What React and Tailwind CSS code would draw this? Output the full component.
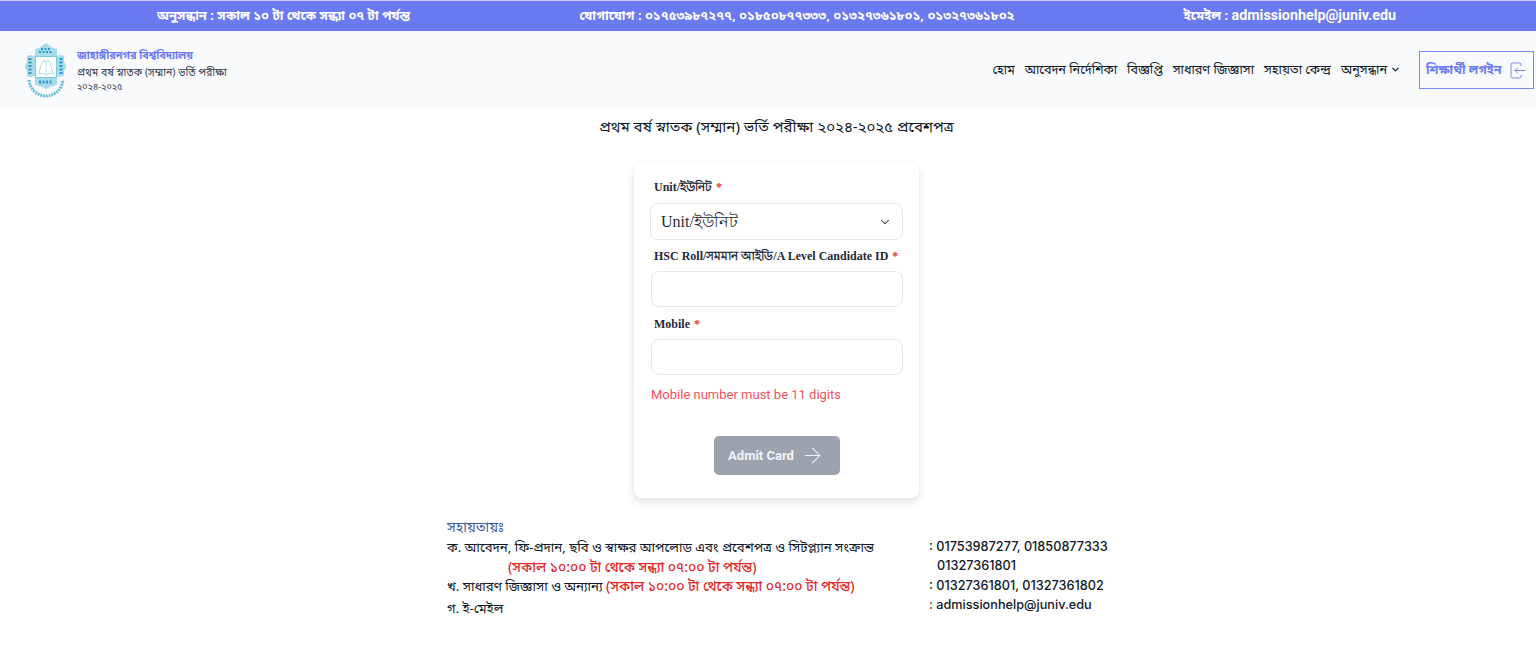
import { ChevronDown, ArrowRight } from "lucide-react";

const BN = "font-['Noto_Sans','Noto_Sans_Bengali','Lohit_Bengali','FreeSerif',sans-serif]";

const NAV_ITEMS = ["হোম", "আবেদন নির্দেশিকা", "বিজ্ঞপ্তি", "সাধারণ জিজ্ঞাসা", "সহায়তা কেন্দ্র"];

function Logo() {
  return (
    <svg width="43" height="55" viewBox="0 0 43 55" fill="none" className="shrink-0">
      {/* side panels */}
      <path d="M1 22l2-3v-6l4-1 4 1v20l-4 1-4-1v-5l-2-3z" fill="#a7dcec" />
      <path d="M42 22l-2-3v-6l-4-1-4 1v20l4 1 4-1v-5l2-3z" fill="#a7dcec" />
      <path d="M6 15v17M37 15v17" stroke="#2f9cc6" strokeWidth="3" strokeDasharray="2 1.5" />
      {/* top and bottom panels */}
      <path d="M11 13V6l4-1 3-2 4-3 4 3 3 2 4 1v7z" fill="#a7dcec" />
      <path d="M15 9h14M17 6h10" stroke="#2f9cc6" strokeWidth="2" strokeDasharray="2 1.5" />
      <path d="M11 35h22v7l-4 1-3 1-4 2-4-2-3-1-4-1z" fill="#a7dcec" />
      <path d="M15 39h14" stroke="#2f9cc6" strokeWidth="3" strokeDasharray="2 1.5" />
      {/* centre with the book */}
      <rect x="11.5" y="13.5" width="21" height="21" fill="#fff" stroke="#7cc8e0" />
      <path d="M15 31c1-6 3-12 5-14l2 3 2-3c2 2 4 8 5 14-3-1-5-1-7 1-2-2-4-2-7-1z" fill="#fff" stroke="#86cde3" strokeWidth="0.7" />
      <path d="M22 20v11" stroke="#86cde3" strokeWidth="0.6" />
      {/* motto round the foot */}
      <path d="M5 37c1 9 8 16 17 16s16-7 17-16" stroke="#6cbfd9" strokeWidth="3" strokeDasharray="2 0.8" />
    </svg>
  );
}

function Field({ label, children }) {
  return (
    <div>
      <label className="block whitespace-nowrap pl-[5px] font-['Liberation_Serif',serif] text-[12px] font-bold leading-[18px] text-[#1f2937]">
        {label} <span className="ml-[1px] text-[#ef2b3c]">*</span>
      </label>
      {children}
    </div>
  );
}

export default function App() {
  return (
    <div className={`min-h-[659px] bg-white ${BN}`}>
      <div className="flex h-[31px] items-center justify-between border-t border-t-[#c5cbf8] bg-[#6b7af0] pl-[157px] pr-[140px] text-[13px] font-bold text-white">
        <span>অনুসন্ধান : সকাল ১০ টা থেকে সন্ধ্যা ০৭ টা পর্যন্ত</span>
        <span>যোগাযোগ : ০১৭৫৩৯৮৭২৭৭, ০১৮৫০৮৭৭৩৩৩, ০১৩২৭৩৬১৮০১, ০১৩২৭৩৬১৮০২</span>
        <span>
          ইমেইল : <span className="font-['Roboto',sans-serif] text-[14.3px]">admissionhelp@juniv.edu</span>
        </span>
      </div>

      <header className="flex h-[78px] items-center justify-between bg-[#f8fafc] pl-[24px] pr-[2px]">
        <div className="flex items-center gap-[10px]">
          <Logo />
          <div>
            <div className="text-[10.8px] font-bold leading-[18px] text-[#6b7af0]">জাহাঙ্গীরনগর বিশ্ববিদ্যালয়</div>
            <div className="text-[10.5px] leading-[16px] text-[#374151]">প্রথম বর্ষ স্নাতক (সম্মান) ভর্তি পরীক্ষা</div>
            <div className="text-[9px] leading-[14px] text-[#374151]">২০২৪-২০২৫</div>
          </div>
        </div>
        <nav className="flex items-center text-[12.6px] text-[#111827]">
          <div className="flex items-center gap-[10px]">
            {NAV_ITEMS.map((item) => (
              <a key={item}>{item}</a>
            ))}
            <a className="flex items-center gap-[3px]">
              অনুসন্ধান <ChevronDown size={11} strokeWidth={2.5} />
            </a>
          </div>
          <button className="ml-[18px] flex h-[38px] w-[115px] items-center gap-[9px] border border-[#7b88f2] pl-[6px] text-[12.5px] font-bold text-[#6b7af0]">
            শিক্ষার্থী লগইন
            <svg width="16" height="17" viewBox="0 0 16 17" fill="none" stroke="#7b88f2" strokeWidth="1">
              <path d="M11 4V2.500A1.500 1.500 0 0 0 9.500 1h-7A1.500 1.500 0 0 0 1 2.500v12A1.500 1.500 0 0 0 2.500 16h7a1.500 1.500 0 0 0 1.500-1.500V13" />
              <path d="M15.500 8.500H5M8 5.500l-3 3 3 3" />
            </svg>
          </button>
        </nav>
      </header>

      <main className="pl-[17px]">
        <h1 className="mt-[7px] text-center text-[15px] leading-[21px] text-[#111827]">
          প্রথম বর্ষ স্নাতক (সম্মান) ভর্তি পরীক্ষা ২০২৪-২০২৫ প্রবেশপত্র
        </h1>

        <div className="mx-auto mt-[26px] h-[335px] w-[285px] rounded-[8px] bg-white px-[15px] pt-[15px] shadow-[0_4px_10px_rgba(0,0,0,0.12)]">
          <Field label="Unit/ইউনিট">
            <div className="mx-[1px] mt-[7px] flex h-[37px] items-center justify-between rounded-[8px] border border-[#e5e7eb] pl-[10px] pr-[10px] font-['Liberation_Serif',serif] text-[16px] text-[#1f2937]">
              Unit/ইউনিট
              <ChevronDown size={14} strokeWidth={1.75} />
            </div>
          </Field>
          <div className="mt-[7px]">
            <Field label="HSC Roll/সমমান আইডি/A Level Candidate ID">
              <input className="mx-[2px] mt-[6px] block h-[36px] w-[252px] rounded-[8px] border border-[#e5e7eb]" />
            </Field>
          </div>
          <div className="mt-[8px]">
            <Field label="Mobile">
              <input className="mx-[2px] mt-[6px] block h-[36px] w-[252px] rounded-[8px] border border-[#e5e7eb]" />
            </Field>
          </div>
          <p className="mx-[2px] mt-[10px] font-['Roboto',sans-serif] text-[13px] leading-[20px] text-[#ef5361]">
            Mobile number must be 11 digits
          </p>
          <button className="mx-auto mt-[31px] flex h-[39px] w-[126px] items-center justify-center gap-[6px] rounded-[5px] bg-[#9ca3af] font-['Roboto',sans-serif] text-[13px] font-bold text-[#f3f4f6]">
            Admit Card
            <ArrowRight size={25} strokeWidth={1} />
          </button>
        </div>
      </main>

      <section className="ml-[447px] mt-[18px] flex text-[13.2px] text-[#111827]">
        <div className="w-[482px]">
          <div className="text-[14px] leading-[21px] text-[#3b5aa6]">সহায়তায়ঃ</div>
          <div className="leading-[20px]">ক. আবেদন, ফি-প্রদান, ছবি ও স্বাক্ষর আপলোড এবং প্রবেশপত্র ও সিটপ্ল্যান সংক্রান্ত</div>
          <div className="pl-[61px] text-[13.8px] font-medium leading-[19px] text-[#e02b2b]">
            (সকাল ১০:০০ টা থেকে সন্ধ্যা ০৭:০০ টা পর্যন্ত)
          </div>
          <div className="leading-[19px]">
            খ. সাধারণ জিজ্ঞাসা ও অন্যান্য{" "}
            <span className="text-[13.8px] font-medium text-[#e02b2b]">(সকাল ১০:০০ টা থেকে সন্ধ্যা ০৭:০০ টা পর্যন্ত)</span>
          </div>
          <div className="mt-[2px] leading-[20px]">গ. ই-মেইল</div>
        </div>
        <div className="pt-[22px] font-['Inter',sans-serif] text-[12.7px] font-medium text-[#111827]">
          <div className="leading-[18px]">: 01753987277, 01850877333</div>
          <div className="pl-[8px] leading-[19px]">01327361801</div>
          <div className="leading-[21px]">: 01327361801, 01327361802</div>
          <div className="leading-[18px]">: admissionhelp@juniv.edu</div>
        </div>
      </section>
    </div>
  );
}
